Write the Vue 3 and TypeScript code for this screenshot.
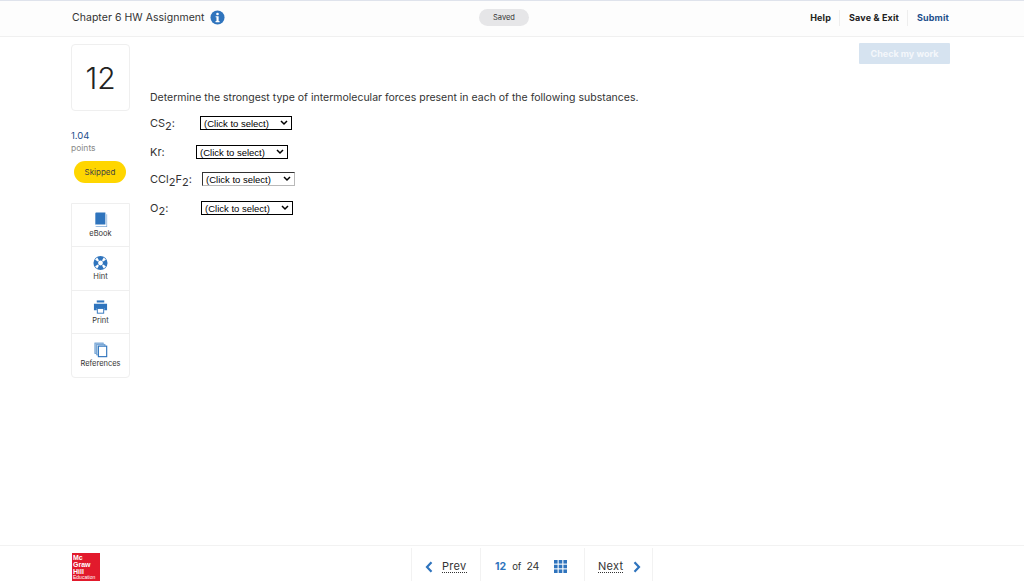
<script setup lang="ts">
const tools = ['eBook', 'Hint', 'Print', 'References']
</script>

<template>
  <div class="page">
    <header class="topbar">
      <div class="title">
        <span>Chapter 6 HW Assignment</span>
        <svg class="info" viewBox="0 0 16 16" width="15" height="15">
          <circle cx="8" cy="8" r="7.5" fill="#2f74bd" />
          <circle cx="8" cy="4.2" r="1.4" fill="#fff" />
          <path d="M6 6.6h3.2v5.2h1V13H5.9v-1.2h1V7.8H6z" fill="#fff" />
        </svg>
      </div>
      <div class="saved">Saved</div>
      <nav class="actions">
        <span class="act">Help</span>
        <span class="act divided">Save &amp; Exit</span>
        <span class="act divided submit">Submit</span>
      </nav>
    </header>

    <main class="main">
      <aside class="side">
        <div class="number">12</div>
        <div class="pts">1.04</div>
        <div class="pts-label">points</div>
        <div class="skipped">Skipped</div>
        <div class="tools">
          <div v-for="t in tools" :key="t" class="tool">
            <svg v-if="t === 'eBook'" viewBox="0 0 16 18" width="14" height="16">
              <path d="M1.5 1.5a1 1 0 0 1 1-1h10.5v13.5H2.5a1 1 0 0 0-1 .6z" fill="#2f74bd" />
              <path d="M14.2 2.5h.8V17H3a1.6 1.6 0 0 1-1.5-1.4c.3.4.7.6 1.2.6h11.5z" fill="#7ea9d6" />
            </svg>
            <svg v-else-if="t === 'Hint'" viewBox="0 0 16 16" width="15" height="15">
              <circle cx="8" cy="8" r="7.5" fill="#2f74bd" />
              <circle cx="8" cy="8" r="2.6" fill="#fff" />
              <path d="M2.2 4.6a7 7 0 0 1 2.4-2.4l1.8 3a3 3 0 0 0-1.2 1.2zM13.8 4.6a7 7 0 0 0-2.4-2.4l-1.8 3a3 3 0 0 1 1.2 1.2zM2.2 11.4a7 7 0 0 0 2.4 2.4l1.8-3a3 3 0 0 1-1.2-1.2zM13.8 11.4a7 7 0 0 1-2.4 2.4l-1.8-3a3 3 0 0 0 1.2-1.2z" fill="#fff" />
            </svg>
            <svg v-else-if="t === 'Print'" viewBox="0 0 16 16" width="15" height="15">
              <rect x="4" y="1" width="8" height="2.2" fill="#2f74bd" />
              <path d="M1 4.5h14v7h-3V9H4v2.5H1z" fill="#2f74bd" />
              <rect x="4.6" y="9.6" width="6.8" height="5" fill="#fff" stroke="#2f74bd" stroke-width="1" />
            </svg>
            <svg v-else viewBox="0 0 16 18" width="14" height="16">
              <rect x="1" y="1" width="9.5" height="12" fill="#a9c6e4" stroke="#6fa0d2" stroke-width="1" />
              <rect x="3" y="2.6" width="9.5" height="12" fill="#cfe0f1" stroke="#6fa0d2" stroke-width="1" />
              <rect x="5" y="4.6" width="9.5" height="12" fill="#fff" stroke="#2f74bd" stroke-width="1.3" />
            </svg>
            <span class="tool-label">{{ t }}</span>
          </div>
        </div>
      </aside>

      <section class="content">
        <p class="prompt">Determine the strongest type of intermolecular forces present in each of the following substances.</p>
        <div class="row r-cs">
          <span class="label w-cs">CS<sub>2</sub>:</span>
          <select class="pick"><option>(Click to select)</option></select>
        </div>
        <div class="row r-kr">
          <span class="label w-kr">Kr:</span>
          <select class="pick"><option>(Click to select)</option></select>
        </div>
        <div class="row r-ccl">
          <span class="label w-ccl">CCl<sub>2</sub>F<sub>2</sub>:</span>
          <select class="pick grey"><option>(Click to select)</option></select>
        </div>
        <div class="row r-o">
          <span class="label w-o">O<sub>2</sub>:</span>
          <select class="pick"><option>(Click to select)</option></select>
        </div>
      </section>

      <div class="check-wrap">
        <button class="check">Check my work</button>
      </div>
    </main>

    <footer class="footer">
      <div class="logo">
        <span>Mc</span><span>Graw</span><span>Hill</span><span class="edu">Education</span>
      </div>
      <div class="pager">
        <div class="pg prev">
          <svg viewBox="0 0 8 12" width="8" height="12"><path d="M6.5 1.2 2 6l4.5 4.8" fill="none" stroke="#2f74bd" stroke-width="2.2" /></svg>
          <span class="link">Prev</span>
        </div>
        <div class="pg count">
          <b>12</b><span class="of">of</span><span class="total">24</span>
          <svg viewBox="0 0 13 13" width="13" height="13">
            <g fill="#2f74bd">
              <rect x="0" y="0" width="3.6" height="3.6" /><rect x="4.7" y="0" width="3.6" height="3.6" /><rect x="9.4" y="0" width="3.6" height="3.6" />
              <rect x="0" y="4.7" width="3.6" height="3.6" /><rect x="4.7" y="4.7" width="3.6" height="3.6" /><rect x="9.4" y="4.7" width="3.6" height="3.6" />
              <rect x="0" y="9.4" width="3.6" height="3.6" /><rect x="4.7" y="9.4" width="3.6" height="3.6" /><rect x="9.4" y="9.4" width="3.6" height="3.6" />
            </g>
          </svg>
        </div>
        <div class="pg next">
          <span class="link">Next</span>
          <svg viewBox="0 0 8 12" width="8" height="12"><path d="M1.5 1.2 6 6l-4.5 4.8" fill="none" stroke="#2f74bd" stroke-width="2.2" /></svg>
        </div>
      </div>
    </footer>
  </div>
</template>

<style>
html, body { margin: 0; background: #fff; }
</style>

<style scoped>
.page {
  width: 1024px;
  height: 587px;
  box-sizing: border-box;
  border-top: 1px solid #dfe3ec;
  display: flex;
  flex-direction: column;
  overflow: hidden;
  font-family: Inter, "Liberation Sans", sans-serif;
  color: #2b2b2b;
}
.topbar {
  height: 36px;
  flex: none;
  box-sizing: border-box;
  background: #fdfdfd;
  border-bottom: 1px solid #f0f0f0;
  padding: 0 75px 2px 72px;
  display: grid;
  grid-template-columns: 407px 50px 1fr;
  align-items: center;
}
.title { display: flex; align-items: center; gap: 5px; font-size: 10.5px; letter-spacing: .04px; color: #333; }
.info { display: block; }
.saved {
  width: 50px; height: 17px; border-radius: 9px; background: #e6e6e8;
  font-size: 7.5px; line-height: 17px; text-align: center; color: #333;
}
.actions { display: flex; justify-content: flex-end; font-size: 9px; font-weight: 700; letter-spacing: .15px; color: #222; }
.act { padding: 0 0 0 9px; line-height: 16px; }
.divided { margin-left: 8px; border-left: 1px solid #eeeeee; }
.submit { color: #1d4f8c; }

.main { flex: 1; display: flex; padding: 7px 74px 0 71px; position: relative; min-height: 0; }
.side { width: 60px; flex: none; display: flex; flex-direction: column; }
.number {
  width: 59px; height: 67px; box-sizing: border-box;
  border: 1px solid #efefef; border-radius: 4px;
  font-size: 30px; font-weight: 300; line-height: 67px; text-align: center; color: #222;
}
.pts { margin-top: 19px; font-size: 9.5px; line-height: 12px; color: #1d4f8c; }
.pts-label { font-size: 8.5px; line-height: 12px; color: #8a8a8a; }
.skipped {
  margin: 7px 0 0 3px; width: 52px; height: 22px; border-radius: 11px;
  background: #ffd600; font-size: 8px; line-height: 22px; text-align: center; color: #444;
}
.tools {
  margin-top: 20px; width: 59px; box-sizing: border-box;
  border: 1px solid #efefef; border-radius: 0 0 4px 4px;
}
.tool {
  height: 43.25px; box-sizing: border-box;
  display: flex; flex-direction: column; align-items: center; padding-top: 8px;
  border-bottom: 1px solid #efefef;
}
.tool:last-child { border-bottom: 0; }
.tool svg { display: block; height: 16px; flex: none; }
.tool-label { font-size: 7.5px; line-height: 12px; color: #333; white-space: nowrap; }

.content { flex: 1; padding: 47px 0 0 19px; font-size: 10.5px; color: #333; }
.prompt { margin: 0; line-height: 14px; white-space: nowrap; }
.row { display: flex; align-items: center; height: 16px; }
.r-cs { margin-top: 10px; }
.r-kr { margin-top: 13px; }
.r-ccl { margin-top: 11px; }
.r-o { margin-top: 13px; }
.label { font-size: 11px; flex: none; }
.label sub { font-size: 11px; line-height: 0; vertical-align: -3px; }
.w-cs { width: 50px; }
.w-kr { width: 46px; }
.w-ccl { width: 52px; }
.w-o { width: 51px; }
.pick {
  appearance: none;
  width: 92px; height: 14px; box-sizing: border-box; padding: 0 0 0 3px;
  border: 1px solid #000; border-radius: 0; color: #000;
  background: #fff url("data:image/svg+xml,%3Csvg xmlns='http://www.w3.org/2000/svg' width='8' height='6'%3E%3Cpath d='M1 1l3 3 3-3' fill='none' stroke='%23000' stroke-width='1.5'/%3E%3C/svg%3E") no-repeat right 3px center;
  font: 9.5px "Liberation Sans", Arial, sans-serif;
}
.pick.grey { width: 93px; border-color: #b9b9b9; border-left-color: #333; border-top-color: #333; }

.check-wrap { position: absolute; top: 6px; right: 74px; }
.check {
  display: block; width: 91px; height: 21px; padding: 0; border: 0; border-radius: 1px;
  background: #d6e3f0; color: #f4f7fb;
  font: 700 9px Inter, "Liberation Sans", sans-serif;
}

.footer {
  height: 41px; flex: none; box-sizing: border-box; margin-bottom: 1px;
  border-top: 1px solid #f2f2f2; position: relative;
}
.logo {
  position: absolute; left: 72px; top: 7px; width: 28px; height: 28px; box-sizing: border-box;
  padding: 1px 0 0 1px; background: #e21a2c; overflow: hidden;
  display: flex; flex-direction: column;
  color: #fff; font: 700 7px/7px "Liberation Sans", sans-serif;
}
.logo .edu { font-size: 5px; line-height: 5px; font-weight: 400; }
.pager { display: flex; height: 33px; position: absolute; left: 411px; top: 2px; }
.pg {
  display: flex; align-items: center; box-sizing: border-box; padding-top: 4px;
  border-left: 1px solid #f2f2f2; font-size: 10.5px; color: #333;
}
.prev { width: 69px; padding-left: 13px; gap: 9px; }
.count { width: 104px; padding-left: 14px; }
.count b { color: #2f74bd; }
.of { margin-left: 6px; font-size: 9.5px; }
.total { margin-left: 5px; }
.count svg { margin-left: 15px; }
.next { width: 69px; padding-left: 13px; gap: 10px; border-right: 1px solid #f2f2f2; }
.link { font-size: 11px; letter-spacing: .3px; border-bottom: 1px dotted #333; line-height: 11px; }
</style>
